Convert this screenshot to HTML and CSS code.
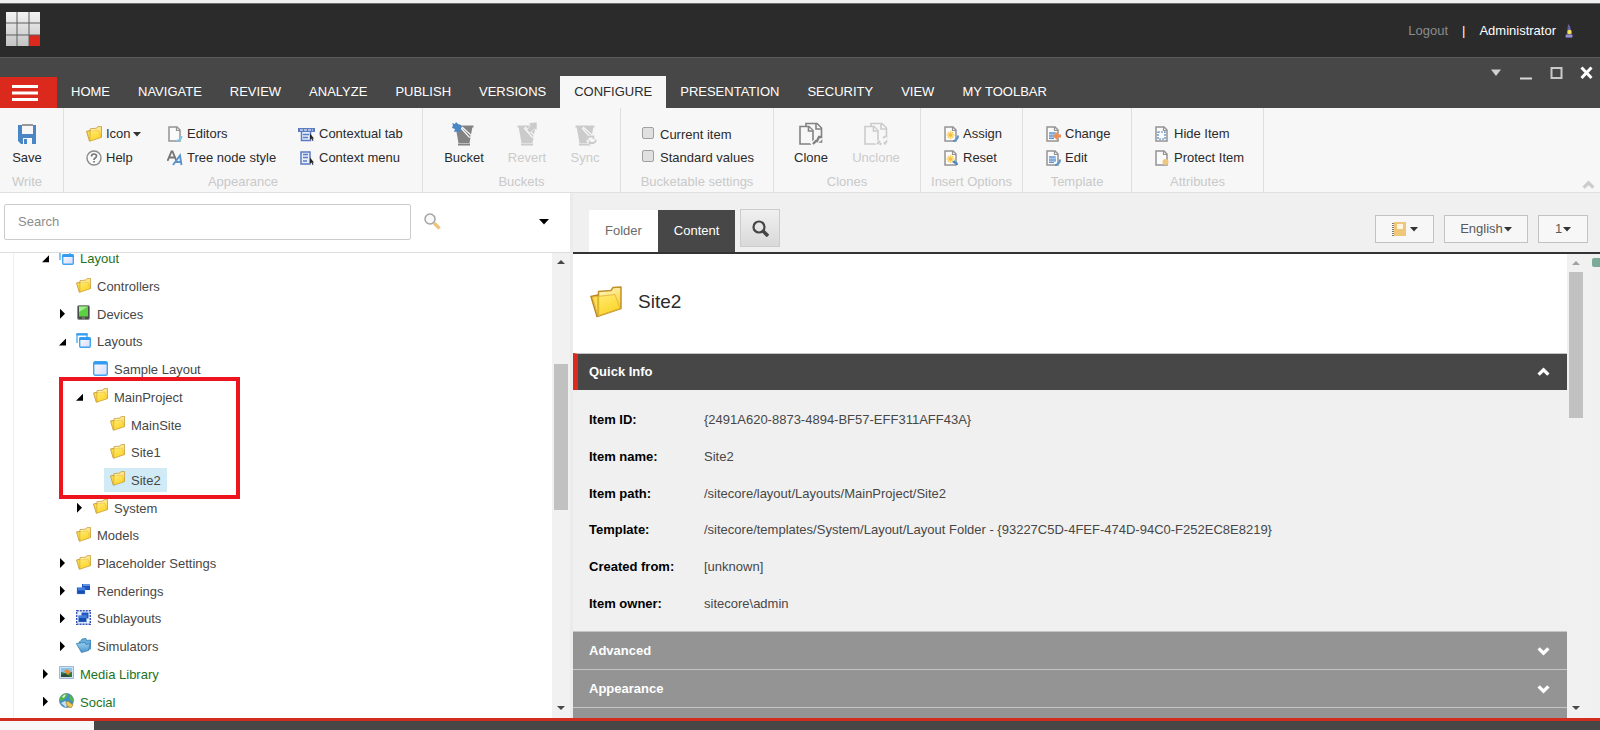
FILE: index.html
```html
<!DOCTYPE html>
<html lang="en">
<head>
<meta charset="utf-8">
<title>Content Editor</title>
<link rel="stylesheet" href="styles.css">
</head>
<body>
<svg class="defs" width="0" height="0" aria-hidden="true">
  <defs>
    <linearGradient id="gold" x1="0" y1="0" x2="0.4" y2="1"><stop offset="0" stop-color="#fffbd0"/><stop offset="1" stop-color="#fbcb1c"/></linearGradient>
    <linearGradient id="pane" x1="0" y1="0" x2="1" y2="1"><stop offset="0" stop-color="#ffffff"/><stop offset="1" stop-color="#d3d8fb"/></linearGradient>
    <linearGradient id="blue" x1="0" y1="0" x2="0" y2="1"><stop offset="0" stop-color="#9bd0f2"/><stop offset="1" stop-color="#4a94cc"/></linearGradient>
    <linearGradient id="cell" x1="0" y1="0" x2="0" y2="1"><stop offset="0" stop-color="#f2f2f2"/><stop offset="1" stop-color="#c4c4c4"/></linearGradient>
  </defs>
  <symbol id="folder" viewBox="0 0 32 32">
    <path d="M1 10.500L8 9V30L7 30.500Z" fill="#f7dc63" stroke="#bd8722" stroke-width="1.500"/>
    <path d="M8.500 5.500L21 4.500L23 1.500L31 1V22.500L8.500 30Z" fill="url(#gold)" stroke="#c0912a" stroke-width="1.500" stroke-linejoin="round"/>
    <path d="M2.500 11L25 8.500L30 22.500L8 30Z" fill="#ffe23c" fill-opacity=".5" stroke="#dcb23c" stroke-width=".8"/>
  </symbol>
  <symbol id="window" viewBox="0 0 15 15">
    <rect x=".7" y=".7" width="13.600" height="13.600" rx="1.500" fill="url(#pane)" stroke="#41a4ee" stroke-width="1.400"/>
    <path d="M1 1h13v2.500H1z" fill="#329af0"/>
  </symbol>
  <symbol id="windows" viewBox="0 0 15 15">
    <path d="M1 10V1h10v3" fill="none" stroke="#41a9f2" stroke-width="1.300"/><path d="M.5.500h11v2H.5z" fill="#329af0"/>
    <rect x="3.700" y="4.700" width="10.600" height="9.600" rx="1" fill="url(#pane)" stroke="#41a4ee" stroke-width="1.400"/><path d="M3.500 4.500h11V7h-11z" fill="#329af0"/>
  </symbol>
  <symbol id="device" viewBox="0 0 15 15">
    <rect x="1.500" y=".5" width="12" height="14" rx="1.500" fill="#474d47" stroke="#8b908b"/><path d="M3 1.500h9v10H3z" fill="#5ccf43"/><path d="M3 1.500h9L3 7z" fill="#a2f08d"/><path d="M6 13h3" stroke="#999"/>
  </symbol>
  <symbol id="renderings" viewBox="0 0 15 15">
    <path d="M6 2h8v6H6z" fill="#1f52bc"/><path d="M7 2h7v2H7z" fill="#5f93e4"/><path d="M1 5.500h8v6.500H1z" fill="#174caf" stroke="#80aaf0" stroke-width=".4"/><path d="M2 6h7v2.500H2z" fill="#3f7fe2"/>
  </symbol>
  <symbol id="sublayouts" viewBox="0 0 15 15">
    <rect x=".7" y=".7" width="13.600" height="13.600" fill="#edf2ff" stroke="#3353b5" stroke-width="1.400" stroke-dasharray="2 1"/>
    <path d="M5.500 2.500h7v6h-7z" fill="#2358c4"/><path d="M2.500 5.500h8v6.500h-8z" fill="#174caf" stroke="#80aaf0" stroke-width=".4"/><path d="M3 6h7v2H3z" fill="#3f7fe2"/>
  </symbol>
  <symbol id="simulators" viewBox="0 0 15 15">
    <path d="M3 4L5 3l1-2 4-.5.500 2 4-.5v9L5 13z" fill="#65aee0" stroke="#397eae" stroke-width=".8"/>
    <path d="M.3 5.500L9 4.500l1 2 4-1-1.500 7L5.500 14.500z" fill="url(#blue)" stroke="#397eae" stroke-width=".8"/>
  </symbol>
  <symbol id="media" viewBox="0 0 15 15">
    <path d="M.5 1.500h14v12H.5z" fill="#cce3f8" stroke="#9fb7d4"/><path d="M2 3h11v9H2z" fill="#86c5f0"/><path d="M2 7l4 1 7-1v5H2z" fill="#2b7d35"/><path d="M5 6l3-2 4 3-3 3z" fill="#ee8731"/><path d="M2 10l4-1 6 3H2z" fill="#334739"/>
  </symbol>
  <symbol id="social" viewBox="0 0 15 15">
    <circle cx="7.500" cy="7.500" r="7" fill="#3d8fcb" stroke="#56798b" stroke-width=".7"/><path d="M2 3q4-3 7-2l-2 4-4 3-2.500-1zM11 2q4 3 3 7l-4-3z" fill="#55b647"/><path d="M3 4q2-3 4-2.500L5 5z" fill="#dff2d5"/><path d="M2 10l4-2 3 2-2 4.500z" fill="#c2e3f5"/><path d="M7 9l2-1 5 4-2 3-4-2z" fill="#f0c64c" stroke="#98742b" stroke-width=".6"/>
  </symbol>
  <symbol id="caret" viewBox="0 0 8 5"><path d="M0 0h8L4 4.500z" fill="currentColor"/></symbol>
  <symbol id="chev" viewBox="0 0 12 9"><path d="M1.500 7L6 2.500 10.500 7" fill="none" stroke="currentColor" stroke-width="3"/></symbol>
  <symbol id="page" viewBox="0 0 16 16"><path d="M2 1h8l3 3v11H2z" fill="#fbfbfb" stroke="#949494" stroke-width="1.500"/><path d="M9.500 1v3.500H13" fill="none" stroke="#949494" stroke-width="1.200"/></symbol>
  <symbol id="pencil" viewBox="0 0 16 16"><path d="M15 9.500q0 4-5 6" fill="none" stroke="#5b95cd" stroke-width="2"/></symbol>
  <symbol id="star" viewBox="0 0 16 16"><path d="M7.500 5v8M3.500 9h8M4.700 6.200l5.600 5.600M10.300 6.200l-5.600 5.600" stroke="#f8d266" stroke-width="1.600"/><circle cx="7.500" cy="9" r="1.500" fill="#f4b942"/></symbol>
  <symbol id="lines" viewBox="0 0 16 16"><path d="M4 6h7v6H4z" fill="#a9c5e5"/><path d="M4 7h6M4 10h7M4 12.500h5" stroke="#6292c8"/></symbol>
  <symbol id="pail" viewBox="0 0 24 24"><path d="M3.500 4.500h17L17.500 21h-11z" fill="currentColor"/><path d="M6 22.500h12" stroke="currentColor" stroke-width="2"/><path d="M2.500 4.500h19" stroke="currentColor" stroke-width="2"/><path d="M9 6l8 9q3 1 2-2L10 5" fill="none" stroke="#f7f7f7" stroke-width="1.200"/></symbol>
  <symbol id="clone" viewBox="0 0 24 24"><g fill="#f7f7f7" stroke="currentColor" stroke-width="1.600"><path d="M7 1.500h11l4.500 4.500v14H7z"/><path d="M17 2v5h5"/><path d="M1 4.500h9l4 4v13.500H1z"/><path d="M9.500 5v4H14"/></g></symbol>
</svg>

<header class="topbar">
  <svg class="logo" viewBox="0 0 34 34" role="img" aria-label="Home">
    <path d="M0 0h34v34H0z" fill="#5e5e5e"/>
    <path d="M0 0h10.500v10.500H0zM11.500 0h11v10.500h-11zM23.500 0H34v10.500H23.500zM0 11.500h10.500v11H0zM11.500 11.500h11v11h-11zM23.500 11.500H34v11H23.500zM0 23.500h10.500V34H0zM11.500 23.500h11V34h-11z" fill="url(#cell)"/>
    <path d="M23.500 23.500H34V34H23.500z" fill="#dc291e"/>
  </svg>
  <div class="account">
    <a class="logout" href="#">Logout</a><span class="bar">|</span><span class="user">Administrator</span>
    <svg class="wizard" viewBox="0 0 8 14"><path d="M3 0q3 2 3 8l2 4-1 2H1l-1-2 2-3z" fill="#6660a0"/><path d="M1 12h6" stroke="#c6c3e4"/><circle cx="4.500" cy="8" r="2.200" fill="#f4df52"/></svg>
  </div>
</header>

<nav class="navbar">
  <button class="menu" aria-label="Menu"><svg viewBox="0 0 26 16"><path d="M0 1.500h26M0 8h26M0 14.500h26" stroke="#fff" stroke-width="3"/></svg></button>
  <a class="tab" href="#">HOME</a><a class="tab" href="#">NAVIGATE</a><a class="tab" href="#">REVIEW</a><a class="tab" href="#">ANALYZE</a><a class="tab" href="#">PUBLISH</a><a class="tab" href="#">VERSIONS</a><a class="tab active" href="#">CONFIGURE</a><a class="tab" href="#">PRESENTATION</a><a class="tab" href="#">SECURITY</a><a class="tab" href="#">VIEW</a><a class="tab" href="#">MY TOOLBAR</a>
  <div class="winctl">
    <button aria-label="Options"><svg viewBox="0 0 13 13"><path d="M1 3h10L6 9.500z" fill="#d0d0d0"/></svg></button>
    <button aria-label="Minimize"><svg viewBox="0 0 13 13"><path d="M0 12h12" stroke="#d8d8d8" stroke-width="2"/></svg></button>
    <button aria-label="Maximize"><svg viewBox="0 0 13 13"><path d="M1.500 1.500h10v10h-10z" fill="none" stroke="#c9c9c9" stroke-width="2"/></svg></button>
    <button aria-label="Close"><svg viewBox="0 0 13 13"><path d="M1.500 1l10 10.500M11.500 1l-10 10.500" stroke="#fff" stroke-width="3"/></svg></button>
  </div>
</nav>

<section class="ribbon">
  <div class="group g-write">
    <div class="bigs"><button class="big"><svg viewBox="0 0 24 24"><path d="M3 3h18v19H6l-3-3z" fill="#4b86c4"/><path d="M7 3h11v9H7z" fill="#f7f7f7"/><path d="M7 3h11" stroke="#999" stroke-width="2"/><path d="M8 16h9v6H8z" fill="#f7f7f7"/><path d="M9 17h3v5H9z" fill="#4b86c4"/></svg>Save</button></div>
    <h2>Write</h2>
  </div>
  <div class="group g-appearance">
    <div class="smalls cols3">
      <button class="small"><svg viewBox="0 0 16 16"><use href="#folder"/></svg>Icon<svg class="caret"><use href="#caret"/></svg></button>
      <button class="small"><svg viewBox="0 0 16 16"><use href="#page"/><path d="M14.500 10q0 4-5 5" fill="none" stroke="#7fc4ea" stroke-width="2"/></svg>Editors</button>
      <button class="small wide"><svg viewBox="0 0 17 16"><path d="M0 2h17v4H0z" fill="#5a7cc4"/><path d="M2 4h13" stroke="#fff" stroke-dasharray="3 1"/><path d="M3.500 6v8.500h9V6" fill="#e8eefb" stroke="#5a7cc4" stroke-width="1.500"/><path d="M5 8.500h6M5 11.500h5" stroke="#5a7cc4" stroke-width="1.400"/><path d="M12 7.500v6l1.500-1 1 2.500 1-.5-1-2h1.500z" fill="#222"/></svg>Contextual tab</button>
      <button class="small"><svg viewBox="0 0 16 16"><circle cx="8" cy="8" r="7" fill="#fafafa" stroke="#8b8b8b" stroke-width="1.400"/><path d="M5.500 6.500q0-2.500 2.500-2.500t2.500 2q0 1.200-1.300 2T8 10" fill="none" stroke="#777" stroke-width="1.700"/><path d="M7.200 11h1.700v1.600H7.200z" fill="#777"/></svg>Help</button>
      <button class="small"><svg viewBox="0 0 16 16"><path d="M.5 11L4.500 1.500h1L9.500 11M2.500 7.500h5" fill="none" stroke="#777" stroke-width="1.900"/><path d="M6 15L13 5.500 14.500 15M8.500 12h6" fill="none" stroke="#5b93cc" stroke-width="1.900"/></svg>Tree node style</button>
      <button class="small wide"><svg viewBox="0 0 17 16"><path d="M3 2h9v12H3z" fill="#e8eefb" stroke="#5a7cc4" stroke-width="1.500"/><path d="M5 4.500h5M5 7.500h5M5 11h4" stroke="#5a7cc4" stroke-width="1.600"/><path d="M12 7.500v6l1.500-1 1 2.500 1-.5-1-2h1.500z" fill="#222"/></svg>Context menu</button>
    </div>
    <h2>Appearance</h2>
  </div>
  <div class="group g-buckets">
    <div class="bigs">
      <button class="big dark"><svg viewBox="0 0 24 24"><use href="#pail"/><path d="M0 1l3 1 1-2 2 2 3 1v6l-7 1 1-3-3-1 1-3z" fill="#4b86c4"/></svg>Bucket</button>
      <button class="big" disabled><svg viewBox="0 0 24 24"><use href="#pail"/><path d="M14 1l8-1v8l-3-1-4 4-3-3 3-4z" fill="currentColor" stroke="#f7f7f7" stroke-width=".6"/></svg>Revert</button>
      <button class="big" disabled><svg viewBox="0 0 24 24"><use href="#pail"/><circle cx="18.500" cy="18" r="5" fill="#f7f7f7"/><path d="M14.500 18v-2l2-1.500h4V17M22.500 17.500v2l-2 1.500h-4v-2.500" fill="none" stroke="currentColor" stroke-width="1.800"/></svg>Sync</button>
    </div>
    <h2>Buckets</h2>
  </div>
  <div class="group g-settings">
    <div class="checks">
      <label><input type="checkbox">Current item</label>
      <label><input type="checkbox">Standard values</label>
    </div>
    <h2>Bucketable settings</h2>
  </div>
  <div class="group g-clones">
    <div class="bigs">
      <button class="big dark"><svg viewBox="0 0 24 24"><use href="#clone"/><path d="M12.500 23l10-8" stroke="#f7f7f7" stroke-width="5"/><path d="M14 22l3-3h2M18 19l2-4h3" fill="none" stroke="currentColor" stroke-width="2.400"/></svg>Clone</button>
      <button class="big" disabled><svg viewBox="0 0 24 24"><use href="#clone"/><path d="M12.500 23l10-8" stroke="#f7f7f7" stroke-width="5"/><path d="M13 22l3-3M19 16l3-2M16 23l1-2M20 21l2 1" stroke="currentColor" stroke-width="2"/></svg>Unclone</button>
    </div>
    <h2>Clones</h2>
  </div>
  <div class="group g-insert">
    <div class="smalls">
      <button class="small"><svg viewBox="0 0 16 16"><use href="#page"/><use href="#star"/><use href="#pencil"/></svg>Assign</button>
      <button class="small"><svg viewBox="0 0 16 16"><use href="#page"/><use href="#star"/><path d="M9 12l3-2v1.500q3 0 3 3.500h-2q0-1.500-1-1.500V14z" fill="#4b86c4"/></svg>Reset</button>
    </div>
    <h2>Insert Options</h2>
  </div>
  <div class="group g-template">
    <div class="smalls">
      <button class="small"><svg viewBox="0 0 16 16"><use href="#page"/><use href="#lines"/><path d="M8 10l4-4v2.500h4v3h-4V14z" fill="#ee9055"/></svg>Change</button>
      <button class="small"><svg viewBox="0 0 16 16"><use href="#page"/><use href="#lines"/><use href="#pencil"/></svg>Edit</button>
    </div>
    <h2>Template</h2>
  </div>
  <div class="group g-attributes">
    <div class="smalls">
      <button class="small"><svg viewBox="0 0 16 16"><use href="#page"/><rect x="4" y="6" width="7" height="7" fill="none" stroke="#4b86c4" stroke-width="1.200" stroke-dasharray="2 1"/></svg>Hide Item</button>
      <button class="small"><svg viewBox="0 0 16 16"><use href="#page"/><circle cx="11.500" cy="12" r="3" fill="#efc77c"/></svg>Protect Item</button>
    </div>
    <h2>Attributes</h2>
  </div>
  <button class="collapse" aria-label="Collapse ribbon"><svg viewBox="0 0 12 9"><use href="#chev"/></svg></button>
</section>

<main class="main">
  <aside class="side">
    <form class="search">
      <input type="text" placeholder="Search" aria-label="Search">
      <button class="go" type="button" aria-label="Search"><svg viewBox="0 0 17 17"><path d="M10 10l5.500 5.500" stroke="#efc37a" stroke-width="3.200"/><circle cx="6" cy="6" r="5" fill="#f8fafa" stroke="#a3a3a3" stroke-width="1.500"/></svg></button>
      <button class="more" type="button" aria-label="Search options"><svg viewBox="0 0 10 6"><path d="M0 0h10L5 5.500z"/></svg></button>
    </form>
    <div class="treewrap">
      <ul class="tree">
        <li class="l0 open green"><a href="#"><svg><use href="#windows"/></svg>Layout</a></li>
        <li class="l1"><a href="#"><svg><use href="#folder"/></svg>Controllers</a></li>
        <li class="l1 shut"><a href="#"><svg><use href="#device"/></svg>Devices</a></li>
        <li class="l1 open"><a href="#"><svg><use href="#windows"/></svg>Layouts</a></li>
        <li class="l2"><a href="#"><svg><use href="#window"/></svg>Sample Layout</a></li>
        <li class="l2 open"><a href="#"><svg><use href="#folder"/></svg>MainProject</a></li>
        <li class="l3"><a href="#"><svg><use href="#folder"/></svg>MainSite</a></li>
        <li class="l3"><a href="#"><svg><use href="#folder"/></svg>Site1</a></li>
        <li class="l3 selected"><a href="#"><svg><use href="#folder"/></svg>Site2</a></li>
        <li class="l2 shut"><a href="#"><svg><use href="#folder"/></svg>System</a></li>
        <li class="l1"><a href="#"><svg><use href="#folder"/></svg>Models</a></li>
        <li class="l1 shut"><a href="#"><svg><use href="#folder"/></svg>Placeholder Settings</a></li>
        <li class="l1 shut"><a href="#"><svg><use href="#renderings"/></svg>Renderings</a></li>
        <li class="l1 shut"><a href="#"><svg><use href="#sublayouts"/></svg>Sublayouts</a></li>
        <li class="l1 shut"><a href="#"><svg><use href="#simulators"/></svg>Simulators</a></li>
        <li class="l0 shut green"><a href="#"><svg><use href="#media"/></svg>Media Library</a></li>
        <li class="l0 shut green"><a href="#"><svg><use href="#social"/></svg>Social</a></li>
      </ul>
      <div class="highlight"></div>
      <div class="scroll tree-scroll"><i class="up"></i><b></b><i class="down"></i></div>
    </div>
  </aside>

  <section class="editor">
    <div class="tabs">
      <button class="etab">Folder</button><button class="etab on">Content</button>
      <button class="find" aria-label="Find"><svg viewBox="0 0 17 17"><path d="M10.500 10.500L16 16" stroke="#444" stroke-width="3.500"/><circle cx="7" cy="7" r="5.500" fill="none" stroke="#444" stroke-width="2.200"/></svg></button>
      <div class="tools">
        <button class="tool t-book" aria-label="Notes"><svg class="book" viewBox="0 0 14 14"><path d="M2 0h12v14H2z" fill="#efc77a"/><path d="M5 2h6v5H5z" fill="#fff6e0"/><path d="M1 1v13" stroke="#777" stroke-width="2" stroke-dasharray="1 1"/></svg><svg class="caret"><use href="#caret"/></svg></button>
        <button class="tool t-lang">English<svg class="caret"><use href="#caret"/></svg></button>
        <button class="tool t-ver">1<svg class="caret"><use href="#caret"/></svg></button>
      </div>
    </div>
    <div class="pane">
      <div class="content">
        <div class="title"><svg viewBox="0 0 32 32"><use href="#folder"/></svg><h1>Site2</h1></div>
        <button class="section current">Quick Info<svg viewBox="0 0 12 9"><use href="#chev"/></svg></button>
        <div class="info">
          <table>
            <tr><th scope="row">Item ID:</th><td>{2491A620-8873-4894-BF57-EFF311AFF43A}</td></tr>
            <tr><th scope="row">Item name:</th><td>Site2</td></tr>
            <tr><th scope="row">Item path:</th><td>/sitecore/layout/Layouts/MainProject/Site2</td></tr>
            <tr><th scope="row">Template:</th><td>/sitecore/templates/System/Layout/Layout Folder - {93227C5D-4FEF-474D-94C0-F252EC8E8219}</td></tr>
            <tr><th scope="row">Created from:</th><td>[unknown]</td></tr>
            <tr><th scope="row">Item owner:</th><td>sitecore\admin</td></tr>
          </table>
        </div>
        <button class="section">Advanced<svg class="flip" viewBox="0 0 12 9"><use href="#chev"/></svg></button>
        <button class="section">Appearance<svg class="flip" viewBox="0 0 12 9"><use href="#chev"/></svg></button>
        <div class="section"></div>
      </div>
      <div class="scroll pane-scroll"><i class="up"></i><b></b><i class="down"></i></div>
      <div class="gutter"><span></span></div>
    </div>
  </section>
</main>
<footer class="footer"><div></div></footer>
</body>
</html>
```

FILE: styles.css
```css
* { box-sizing: border-box; }
body {
  margin: 0;
  height: 100vh;
  display: flex;
  flex-direction: column;
  overflow: hidden;
  border-top: 3px solid #f0f0f0;
  background: #fff;
  color: #2b2b2b;
  font: 13px/16px "Liberation Sans", Arial, sans-serif;
}
button { font: inherit; color: inherit; border: 0; padding: 0; background: none; }
a { color: inherit; text-decoration: none; }
svg { display: block; flex: none; }
.defs { position: absolute; }
.caret { width: 8px; height: 5px; color: #333; }

.topbar {
  flex: none;
  height: 55px;
  display: flex;
  align-items: center;
  justify-content: space-between;
  padding: 0 27px 4px 6px;
  background: #2b2b2b;
  border-top: 1px solid #6e6e6e;
  border-bottom: 1px solid #5c5c5c;
}
.logo { width: 34px; height: 34px; }
.account { display: flex; align-items: center; color: #fff; padding-top: 4px; }
.logout { color: #8c8c8c; }
.bar { margin: 0 14px; }
.wizard { width: 8px; height: 14px; margin-left: 9px; }

.navbar {
  flex: none;
  height: 50px;
  display: flex;
  align-items: flex-end;
  background: #474747;
  color: #fff;
}
.menu { width: 57px; height: 31px; background: #dc291e; display: flex; align-items: center; padding-left: 12px; }
.menu svg { width: 26px; height: 16px; }
.tab { height: 32px; padding: 8px 14px; line-height: 16px; }
.tab.active { background: #f7f7f7; color: #2b2b2b; }
.winctl { align-self: flex-start; margin-left: auto; display: flex; gap: 17px; padding: 8px 7px 0 0; }
.winctl svg { width: 13px; height: 14px; }

.ribbon {
  flex: none;
  height: 85px;
  display: flex;
  background: #f7f7f7;
  border-bottom: 1px solid #e0e0e0;
}
.group {
  display: flex;
  flex-direction: column;
  justify-content: space-between;
  border-right: 1px solid #e0e0e0;
  padding: 14px 0 2px;
}
.group h2 { margin: 0; font: inherit; color: #c9c9c9; text-align: center; white-space: nowrap; }
.g-write { width: 64px; padding-right: 9px; }
.g-appearance { width: 359px; }
.g-buckets { width: 198px; }
.g-settings { width: 153px; }
.g-clones { width: 147px; }
.g-insert { width: 102px; }
.g-template { width: 109px; }
.g-attributes { width: 132px; }

.bigs { display: flex; justify-content: center; }
.g-buckets .bigs { display: grid; grid-template-columns: 62px 64px 52px; justify-content: start; padding-left: 10px; }
.g-clones .bigs { display: grid; grid-template-columns: 66px 64px; justify-content: start; padding-left: 4px; }
.big { display: flex; flex-direction: column; align-items: center; gap: 4px; white-space: nowrap; }
.big svg { width: 24px; height: 24px; }
.big.dark svg { color: #828282; }
.big:disabled { color: #cbcbcb; }

.smalls { display: grid; grid-auto-rows: 24px; padding-left: 22px; justify-content: start; }
.cols3 { grid-template-columns: 81px 131px 120px; }
.small { display: flex; align-items: center; gap: 4px; white-space: nowrap; text-align: left; }
.small svg:first-child { width: 16px; height: 16px; }
.small.wide svg:first-child { width: 17px; }
.small .caret { margin-left: -2px; }

.checks { display: flex; flex-direction: column; padding: 1px 0 0 21px; }
.checks label { display: flex; align-items: center; gap: 6px; height: 23px; }
.checks input {
  appearance: none;
  width: 12px;
  height: 12px;
  margin: 0 0 3px;
  border: 1px solid #a0a0a0;
  border-radius: 2px;
  background: #e0e0e0;
}
.collapse { margin: auto 5px 2px auto; color: #ccc; }
.collapse svg { width: 13px; height: 10px; }

.main { flex: 1; min-height: 0; display: flex; }
.side { width: 573px; flex: none; display: flex; flex-direction: column; border-right: 3px solid #ebebeb; }
.search {
  flex: none;
  height: 60px;
  display: flex;
  align-items: center;
  padding: 0 21px 2px 4px;
  border-bottom: 1px solid #dedede;
}
.search input {
  width: 407px;
  height: 36px;
  padding: 0 13px;
  border: 1px solid #ccc;
  border-radius: 2px;
  font: inherit;
}
.search input::placeholder { color: #8c8c8c; }
.go { margin-left: 13px; }
.go svg { width: 17px; height: 17px; }
.more { margin-left: auto; }
.more svg { width: 10px; height: 6px; }

.treewrap { position: relative; flex: 1; min-height: 0; display: flex; overflow: hidden; }
.tree {
  flex: 1;
  display: flex;
  flex-direction: column;
  list-style: none;
  margin: -8px 0 0 13px;
  padding: 0 0 2px;
  border-left: 1px solid #efefef;
  color: #474747;
  line-height: 12px;
}
.tree li { flex: 1; display: flex; align-items: center; min-height: 0; }
.tree li::before { content: ""; width: 8px; height: 10px; margin: 0 3px 1px 0; }
.tree .shut::before { background: #000; clip-path: polygon(1px 0, 6px 5px, 1px 10px); }
.tree .open::before { background: #000; clip-path: polygon(7px 2px, 7px 9px, 0 9px); }
.l0 { padding-left: 28px; }
.l1 { padding-left: 45px; }
.l2 { padding-left: 62px; }
.l3 { padding-left: 79px; }
.tree a { display: flex; align-items: center; gap: 6px; height: 24px; padding: 1px 6px 0; }
.tree svg { width: 15px; height: 15px; margin-bottom: 4px; }
.tree .green { color: #1d7324; }
.tree .selected a { background: #d0ebf6; }
.highlight { position: absolute; top: 124px; left: 59px; width: 181px; height: 122px; border: 4px solid #ee141e; }

.scroll { flex: none; width: 18px; display: flex; flex-direction: column; align-items: center; background: #f1f1f1; }
.scroll i { width: 8px; height: 4px; background: #484848; }
.scroll .up { margin: 7px 0; clip-path: polygon(0 100%, 50% 0, 100% 100%); }
.scroll .down { margin: auto 0 8px; clip-path: polygon(0 0, 100% 0, 50% 100%); }
.scroll b { width: 14px; height: 146px; background: #c1c1c1; }
.tree-scroll b { margin-top: 93px; }
.pane-scroll .up { background: #a0a0a0; }

.editor { flex: 1; min-width: 0; display: flex; flex-direction: column; background: #f0f0f0; }
.tabs {
  flex: none;
  height: 61px;
  display: flex;
  align-items: flex-end;
  padding: 0 12px 0 16px;
  border-bottom: 2px solid #333;
}
.etab { height: 42px; padding: 0 16px; background: #fff; color: #6b6b6b; }
.etab.on { background: #474747; color: #fff; }
.find {
  width: 40px;
  height: 38px;
  margin: 0 0 5px 5px;
  display: grid;
  place-items: center;
  border: 1px solid #ccc;
  background: linear-gradient(#f0f0f0, #d9d9d9);
}
.find svg { width: 17px; height: 17px; }
.tools { margin: 0 0 9px auto; display: flex; gap: 10px; }
.tool {
  height: 28px;
  display: flex;
  align-items: center;
  justify-content: center;
  gap: 1px;
  border: 1px solid #c2c2c2;
  background: #f7f7f7;
  color: #5a5a5a;
}
.t-book { width: 59px; gap: 4px; }
.t-lang { width: 84px; }
.t-ver { width: 50px; }
.book { width: 14px; height: 14px; }

.pane { flex: 1; min-height: 0; display: flex; overflow: hidden; }
.content { flex: 1; min-width: 0; display: flex; flex-direction: column; overflow: hidden; }
.title { flex: none; height: 99px; display: flex; align-items: center; gap: 16px; padding: 0 0 3px 17px; background: #fff; }
.title svg { width: 32px; height: 32px; }
.title h1 { margin: 0; font: 19px/24px "Liberation Sans", Arial, sans-serif; }
.section {
  flex: none;
  height: 38px;
  display: flex;
  align-items: center;
  justify-content: space-between;
  padding: 0 17px 0 16px;
  border-top: 1px solid #c4c4c4;
  background: #949494;
  color: #fff;
  font-weight: bold;
}
.section svg { width: 13px; height: 10px; }
.section .flip { transform: rotate(180deg); }
.section.current { height: 37px; background: #474747; border-left: 5px solid #dc291e; padding-left: 11px; }
.info { flex: none; padding: 12px 16px 9px; }
.info table { border-collapse: collapse; height: 220px; }
.info th { width: 115px; padding: 0; text-align: left; color: #000; }
.info td { padding: 0; color: #474747; }
.gutter { flex: none; width: 15px; display: flex; justify-content: flex-end; align-items: flex-start; padding-top: 4px; }
.gutter span { width: 8px; height: 9px; border-radius: 2px 0 0 2px; background: #7aab98; }

.footer { flex: none; height: 12px; border-top: 3px solid #d22b20; background: #474747; }
.footer div { width: 94px; height: 9px; background: #f7f7f7; }
```
